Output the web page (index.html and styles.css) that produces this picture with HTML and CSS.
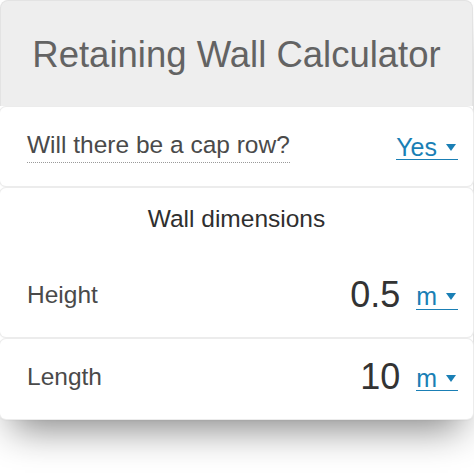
FILE: index.html
```html
<!DOCTYPE html>
<html lang="en">
<head>
    <meta charset="UTF-8">
    <meta name="viewport" content="width=device-width, initial-scale=1.0">
    <title>Retaining Wall Calculator</title>
    <link rel="stylesheet" href="styles.css">
</head>
<body>
    <div class="calculator">
        <div class="calc-header">
            <h1>Retaining Wall Calculator</h1>
        </div>

        <div class="block row row-question">
            <span class="label label-hint">Will there be a cap row?</span>
            <span class="select">Yes<svg class="caret" width="10" height="7" viewBox="0 0 10 7"><polygon points="0,0 10,0 5,7"/></svg></span>
        </div>

        <div class="block">
            <div class="block-title">Wall dimensions</div>
            <div class="row">
                <span class="label">Height</span>
                <div class="input">
                    <span class="value">0.5</span>
                    <span class="select unit">m<svg class="caret" width="10" height="7" viewBox="0 0 10 7"><polygon points="0,0 10,0 5,7"/></svg></span>
                </div>
            </div>
        </div>

        <div class="block row row-last">
            <span class="label">Length</span>
            <div class="input">
                <span class="value">10</span>
                <span class="select unit">m<svg class="caret" width="10" height="7" viewBox="0 0 10 7"><polygon points="0,0 10,0 5,7"/></svg></span>
            </div>
        </div>
    </div>
</body>
</html>
```

FILE: styles.css
```css
* {
    margin: 0;
    padding: 0;
    box-sizing: border-box;
}

body {
    font-family: 'Liberation Sans', Arial, sans-serif;
    background-color: #fff;
    width: 474px;
    height: 474px;
    overflow: hidden;
}

.calculator {
    width: 473px;
    border-radius: 8px 8px 6px 6px;
    box-shadow: 0 22px 36px -12px rgba(0, 0, 0, 0.48);
}

.calc-header {
    height: 106px;
    background-color: #eeeeee;
    border: 1px solid #e3e3e3;
    border-bottom: none;
    border-radius: 8px 8px 0 0;
    display: flex;
    justify-content: center;
    align-items: center;
}

h1 {
    font-weight: normal;
    font-size: 36.5px;
    color: #636363;
    padding-top: 2px;
}

.block {
    background-color: #fff;
    border-radius: 6px;
    box-shadow: 0 0 0 1px #ececec, 0 1px 2px rgba(0, 0, 0, 0.08);
    margin-top: 2px;
}

.calc-header + .block {
    margin-top: 1px;
}

.block-title {
    text-align: center;
    font-size: 24.5px;
    line-height: 28px;
    color: #2f2f2f;
    padding: 17px 0 20px;
}

.row {
    height: 84px;
    display: flex;
    justify-content: space-between;
    align-items: center;
    padding: 0 15px 0 27px;
}

.row-question {
    height: 79px;
}

.row-last {
    height: 80px;
    padding-bottom: 5px;
}

.label {
    font-size: 24.5px;
    line-height: 28px;
    color: #4a4a4a;
}

.label-hint {
    border-bottom: 1px dotted #9a9a9a;
    padding-bottom: 3px;
    margin-top: 1px;
}

.input {
    display: flex;
    align-items: center;
}

.value {
    font-size: 36px;
    color: #333;
    margin-right: 16px;
}

.select {
    font-size: 25px;
    line-height: 24.5px;
    color: #1a7fb5;
    border-bottom: 1px solid #1a7fb5;
    padding-right: 2px;
    margin-top: 2px;
}

.unit {
    margin-top: 4px;
}

.caret {
    fill: #1a7fb5;
    margin-left: 9px;
    vertical-align: 5px;
}
```
